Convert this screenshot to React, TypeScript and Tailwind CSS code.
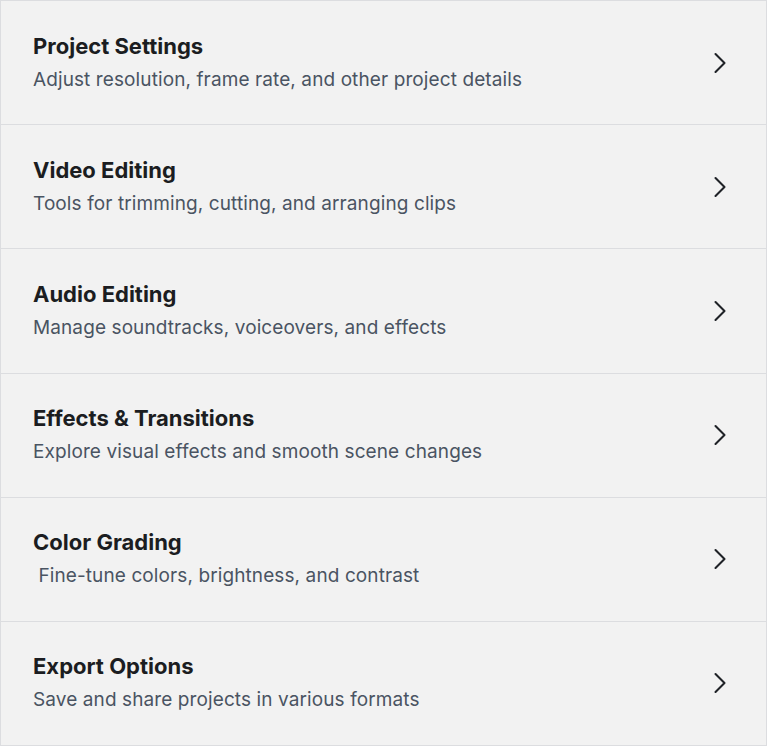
import { ChevronRight } from 'lucide-react';

interface SettingsItem {
  title: string;
  description: string;
}

const items: SettingsItem[] = [
  { title: 'Project Settings', description: 'Adjust resolution, frame rate, and other project details' },
  { title: 'Video Editing', description: 'Tools for trimming, cutting, and arranging clips' },
  { title: 'Audio Editing', description: 'Manage soundtracks, voiceovers, and effects' },
  { title: 'Effects & Transitions', description: 'Explore visual effects and smooth scene changes' },
  { title: 'Color Grading', description: '\u00a0Fine-tune colors, brightness, and contrast' },
  { title: 'Export Options', description: 'Save and share projects in various formats' },
];

export default function App() {
  return (
    <div className="w-[767px] h-[746px] bg-[#f2f2f2] font-['Inter',sans-serif]">
      <div className="flex h-full flex-col border border-[#dcdde0] bg-[#f2f2f2]">
        {items.map((item, i) => (
          <button
            key={item.title}
            className={`flex flex-1 items-center justify-between pl-8 pr-7 text-left ${
              i < items.length - 1 ? 'border-b border-[#dcdde0]' : ''
            }`}
          >
            <div className="flex flex-col gap-[6px]">
              <span className="text-[22px] leading-7 font-bold text-[#1b1d21]">{item.title}</span>
              <span className="text-[19px] leading-7 tracking-[0.1px] text-[#4a5462]">{item.description}</span>
            </div>
            <ChevronRight size={36} strokeWidth={1.4} className="text-[#1f2227]" />
          </button>
        ))}
      </div>
    </div>
  );
}
